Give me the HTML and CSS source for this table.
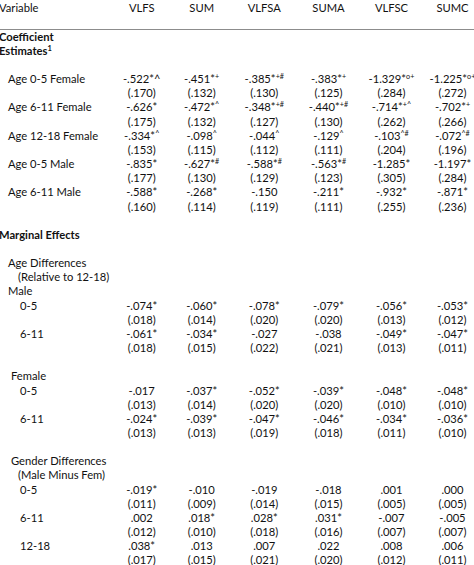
FILE: index.html
```html
<!DOCTYPE html>
<html lang="en">
<head>
<meta charset="utf-8">
<title>Regression results</title>
<link rel="stylesheet" href="styles.css">
</head>
<body>
<table class="results">
  <colgroup>
    <col class="c-label">
    <col class="c1"><col class="c2"><col class="c3"><col class="c4"><col class="c5"><col class="c6">
  </colgroup>
  <thead>
    <tr>
      <th class="lbl">Variable</th>
      <th>VLFS</th><th>SUM</th><th>VLFSA</th><th>SUMA</th><th>VLFSC</th><th>SUMC</th>
    </tr>
  </thead>
  <tbody>
    <tr><td class="lbl sec">Coefficient</td><td></td><td></td><td></td><td></td><td></td><td></td></tr>
    <tr><td class="lbl sec">Estimates<sup class="fn">1</sup></td><td></td><td></td><td></td><td></td><td></td><td></td></tr>
    <tr class="blank"><td colspan="7"></td></tr>

    <tr><td class="lbl i1">Age 0-5 Female</td><td>-.522*^</td><td>-.451*<sup>+</sup></td><td>-.385*<sup>+#</sup></td><td>-.383*<sup>+</sup></td><td>-1.329*<sup>o+</sup></td><td>-1.225*<sup>o+</sup></td></tr>
    <tr><td class="lbl"></td><td>(.170)</td><td>(.132)</td><td>(.130)</td><td>(.125)</td><td>(.284)</td><td>(.272)</td></tr>
    <tr><td class="lbl i1">Age 6-11 Female</td><td>-.626*</td><td>-.472*<sup>^</sup></td><td>-.348*<sup>+#</sup></td><td>-.440*<sup>+#</sup></td><td>-.714*<sup>+^</sup></td><td>-.702*<sup>+</sup></td></tr>
    <tr><td class="lbl"></td><td>(.175)</td><td>(.132)</td><td>(.127)</td><td>(.130)</td><td>(.262)</td><td>(.266)</td></tr>
    <tr><td class="lbl i1">Age 12-18 Female</td><td>-.334*<sup>^</sup></td><td>-.098<sup>^</sup></td><td>-.044<sup>^</sup></td><td>-.129<sup>^</sup></td><td>-.103<sup>^#</sup></td><td>-.072<sup>^#</sup></td></tr>
    <tr><td class="lbl"></td><td>(.153)</td><td>(.115)</td><td>(.112)</td><td>(.111)</td><td>(.204)</td><td>(.196)</td></tr>
    <tr><td class="lbl i1">Age 0-5 Male</td><td>-.835*</td><td>-.627*<sup>#</sup></td><td>-.588*<sup>#</sup></td><td>-.563*<sup>#</sup></td><td>-1.285*</td><td>-1.197*</td></tr>
    <tr><td class="lbl"></td><td>(.177)</td><td>(.130)</td><td>(.129)</td><td>(.123)</td><td>(.305)</td><td>(.284)</td></tr>
    <tr><td class="lbl i1">Age 6-11 Male</td><td>-.588*</td><td>-.268*</td><td>-.150</td><td>-.211*</td><td>-.932*</td><td>-.871*</td></tr>
    <tr><td class="lbl"></td><td>(.160)</td><td>(.114)</td><td>(.119)</td><td>(.111)</td><td>(.255)</td><td>(.236)</td></tr>
    <tr class="blank"><td colspan="7"></td></tr>

    <tr><td class="lbl sec" colspan="7">Marginal Effects</td></tr>
    <tr class="blank"><td colspan="7"></td></tr>

    <tr><td class="lbl i1" colspan="7">Age Differences</td></tr>
    <tr><td class="lbl i2" colspan="7">(Relative to 12-18)</td></tr>
    <tr><td class="lbl i1" colspan="7">Male</td></tr>
    <tr><td class="lbl i3">0-5</td><td>-.074*</td><td>-.060*</td><td>-.078*</td><td>-.079*</td><td>-.056*</td><td>-.053*</td></tr>
    <tr><td class="lbl"></td><td>(.018)</td><td>(.014)</td><td>(.020)</td><td>(.020)</td><td>(.013)</td><td>(.012)</td></tr>
    <tr><td class="lbl i3">6-11</td><td>-.061*</td><td>-.034*</td><td>-.027</td><td>-.038</td><td>-.049*</td><td>-.047*</td></tr>
    <tr><td class="lbl"></td><td>(.018)</td><td>(.015)</td><td>(.022)</td><td>(.021)</td><td>(.013)</td><td>(.011)</td></tr>
    <tr class="blank"><td colspan="7"></td></tr>

    <tr><td class="lbl i1b" colspan="7">Female</td></tr>
    <tr><td class="lbl i3">0-5</td><td>-.017</td><td>-.037*</td><td>-.052*</td><td>-.039*</td><td>-.048*</td><td>-.048*</td></tr>
    <tr><td class="lbl"></td><td>(.013)</td><td>(.014)</td><td>(.020)</td><td>(.020)</td><td>(.010)</td><td>(.010)</td></tr>
    <tr><td class="lbl i3">6-11</td><td>-.024*</td><td>-.039*</td><td>-.047*</td><td>-.046*</td><td>-.034*</td><td>-.036*</td></tr>
    <tr><td class="lbl"></td><td>(.013)</td><td>(.013)</td><td>(.019)</td><td>(.018)</td><td>(.011)</td><td>(.010)</td></tr>
    <tr class="blank"><td colspan="7"></td></tr>

    <tr><td class="lbl i1b" colspan="7">Gender Differences</td></tr>
    <tr><td class="lbl i2" colspan="7">(Male Minus Fem)</td></tr>
    <tr><td class="lbl i3">0-5</td><td>-.019*</td><td>-.010</td><td>-.019</td><td>-.018</td><td>.001</td><td>.000</td></tr>
    <tr><td class="lbl"></td><td>(.011)</td><td>(.009)</td><td>(.014)</td><td>(.015)</td><td>(.005)</td><td>(.005)</td></tr>
    <tr><td class="lbl i3">6-11</td><td>.002</td><td>.018*</td><td>.028*</td><td>.031*</td><td>-.007</td><td>-.005</td></tr>
    <tr><td class="lbl"></td><td>(.012)</td><td>(.010)</td><td>(.018)</td><td>(.016)</td><td>(.007)</td><td>(.007)</td></tr>
    <tr><td class="lbl i3">12-18</td><td>.038*</td><td>.013</td><td>.007</td><td>.022</td><td>.008</td><td>.006</td></tr>
    <tr><td class="lbl"></td><td>(.017)</td><td>(.015)</td><td>(.021)</td><td>(.020)</td><td>(.012)</td><td>(.011)</td></tr>
  </tbody>
</table>
</body>
</html>
```

FILE: styles.css
```css
html, body {
  margin: 0;
  padding: 0;
  background: #ffffff;
}

body {
  width: 474px;
  height: 565px;
  overflow: hidden;
  font-family: Lato, "Liberation Sans", sans-serif;
  font-size: 11.2px;
  color: #111111;
}

.results {
  border-collapse: collapse;
  table-layout: fixed;
  width: 484.4px;
  margin-left: -2px;
}

.c-label { width: 114px; }
.c1 { width: 59.4px; }
.c2 { width: 60.6px; }
.c3 { width: 64.6px; }
.c4 { width: 63.8px; }
.c5 { width: 62.2px; }
.c6 { width: 59.8px; }

.results th,
.results td {
  padding: 0;
  line-height: 14.15px;
  height: 14.15px;
  text-align: center;
  white-space: nowrap;
  font-weight: normal;
  vertical-align: top;
}

.results thead th {
  padding-top: 1px;
  padding-bottom: 13.5px;
  border-bottom: 1px solid #8c8c8c;
}

.results .lbl {
  text-align: left;
  padding-left: 1px;
}

.results .sec { font-weight: bold; }
.results .i1 { padding-left: 10px; }
.results .i1b { padding-left: 13px; }
.results .i2 { padding-left: 20px; }
.results .i3 { padding-left: 22px; }

.results sup {
  font-size: 7.2px;
  line-height: 0;
  vertical-align: 4px;
}

.results sup.fn {
  font-size: 7.5px;
}

.blank td { height: 14.15px; }
```
